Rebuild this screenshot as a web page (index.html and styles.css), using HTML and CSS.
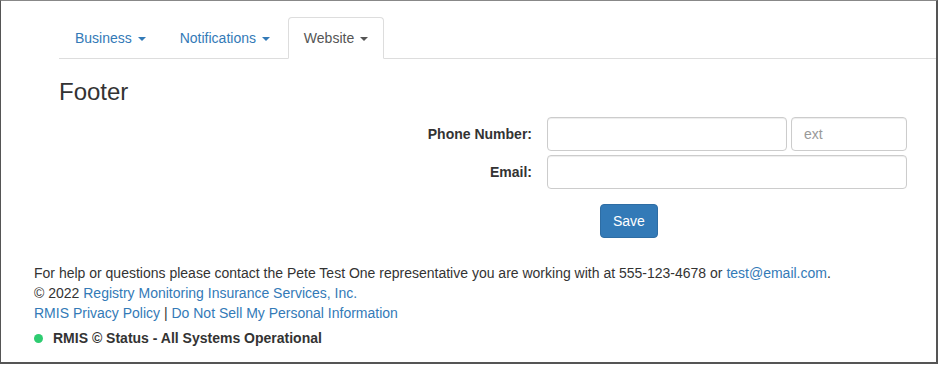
FILE: index.html
```html
<!DOCTYPE html>
<html>
<head>
    <meta charset="UTF-8">
    <title>Footer</title>
    <link rel="stylesheet" href="styles.css">
</head>
<body>
    <div class="frame">
        <div class="main">
            <ul class="tabs">
                <li><a href="#">Business <span class="caret"></span></a></li>
                <li><a href="#">Notifications <span class="caret"></span></a></li>
                <li class="active"><a href="#">Website <span class="caret"></span></a></li>
            </ul>
            <h3 class="title">Footer</h3>
            <form class="form" onsubmit="return false">
                <div class="row">
                    <label class="lbl" for="phone">Phone Number:</label>
                    <div class="ctrl">
                        <input type="text" id="phone" class="inp phone">
                        <input type="text" class="inp ext" placeholder="ext">
                    </div>
                </div>
                <div class="row">
                    <label class="lbl" for="email">Email:</label>
                    <div class="ctrl">
                        <input type="text" id="email" class="inp">
                    </div>
                </div>
                <div class="row">
                    <span class="lbl"></span>
                    <div class="ctrl">
                        <button class="btn">Save</button>
                    </div>
                </div>
            </form>
        </div>
        <div class="foot">
            <p>For help or questions please contact the Pete Test One representative you are working with at 555-123-4678 or <a href="#">test@email.com</a>.</p>
            <p>&copy; 2022 <a href="#">Registry Monitoring Insurance Services, Inc.</a></p>
            <p><a href="#">RMIS Privacy Policy</a> | <a href="#">Do Not Sell My Personal Information</a></p>
            <p class="status"><span class="dot"></span>RMIS &copy; Status - All Systems Operational</p>
        </div>
    </div>
</body>
</html>
```

FILE: styles.css
```css
html, body {
    margin: 0;
    padding: 0;
    background: #fff;
}

body {
    font-family: "Liberation Sans", Arial, sans-serif;
    font-size: 14px;
    line-height: 20px;
    color: #333;
}

a {
    color: #337ab7;
    text-decoration: none;
}

.frame {
    box-sizing: border-box;
    width: 938px;
    height: 364px;
    border: 1px solid #555;
    border-top-color: #888;
    border-right-width: 2px;
    border-bottom-width: 2px;
    padding-top: 16px;
}

.main {
    padding-left: 58px;
}

.tabs {
    list-style: none;
    margin: 0;
    padding: 0;
    display: flex;
    border-bottom: 1px solid #ddd;
}

.tabs li {
    margin-bottom: -1px;
    margin-right: 2px;
}

.tabs a {
    display: block;
    padding: 10px 15px;
    border: 1px solid transparent;
    border-radius: 4px 4px 0 0;
}

.tabs .active a {
    color: #555;
    background: #fff;
    border-color: #ddd;
    border-bottom-color: transparent;
}

.caret {
    display: inline-block;
    width: 0;
    height: 0;
    margin-left: 2px;
    vertical-align: middle;
    border-top: 4px solid;
    border-right: 4px solid transparent;
    border-left: 4px solid transparent;
}

.title {
    font-size: 24px;
    font-weight: 500;
    line-height: 1.1;
    margin: 20px 0 12px;
}

.form {
    width: 849px;
}

.row {
    display: flex;
    align-items: center;
    margin-bottom: 4px;
}

.row:last-child {
    margin-top: 15px;
}

.lbl {
    width: 473px;
    text-align: right;
    font-weight: bold;
    padding-right: 15px;
}

.ctrl {
    display: flex;
    gap: 4px;
    width: 360px;
}

.inp {
    box-sizing: border-box;
    height: 34px;
    width: 100%;
    padding: 6px 12px;
    font-family: inherit;
    font-size: 14px;
    color: #555;
    border: 1px solid #ccc;
    border-radius: 4px;
    box-shadow: inset 0 1px 1px rgba(0,0,0,.075);
}

.inp::placeholder {
    color: #999;
}

.phone {
    width: 240px;
}

.ext {
    width: 116px;
}

.btn {
    margin-left: 53px;
    height: 34px;
    padding: 6px 12px;
    font-family: inherit;
    font-size: 14px;
    color: #fff;
    background: #337ab7;
    border: 1px solid #2e6da4;
    border-radius: 4px;
}

.foot {
    padding-left: 33px;
    margin-top: 25px;
}

.foot p {
    margin: 0;
}

.status {
    margin-top: 5px !important;
    font-weight: bold;
    display: flex;
    align-items: center;
}

.dot {
    width: 9px;
    height: 9px;
    border-radius: 50%;
    background: #2ecc71;
    margin-right: 10px;
}
```
